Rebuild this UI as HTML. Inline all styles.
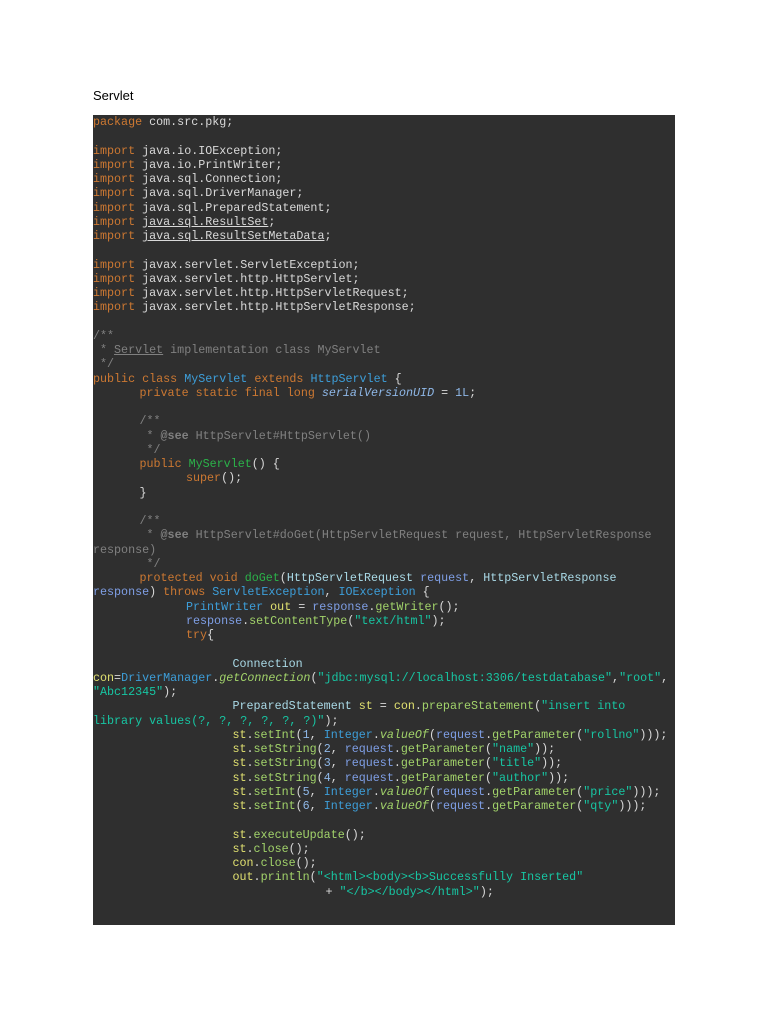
<!DOCTYPE html>
<html><head><meta charset="utf-8"><style>
body{margin:0;background:#fff;width:768px;height:1024px;position:relative;overflow:hidden}
.t{position:absolute;left:93px;top:88px;font:13px "Liberation Sans",sans-serif;color:#000}
pre{position:absolute;left:93px;top:115px;width:582px;height:810px;margin:0;background:#2f2f2f;color:#d9d9d9;font:11.7px/14.25px "Liberation Mono",monospace;white-space:pre;tab-size:46.5px;-moz-tab-size:46.5px;overflow:hidden}
.k{color:#cc7832}.c{color:#808080}.b{color:#3d9ed9}.y{color:#e0e070}.p{color:#7f9fe6}.s{color:#17c6a3}.m{color:#a2d36a}.g{color:#2bb34a}.n{color:#a9d9e6}.i{font-style:italic}.u{text-decoration:underline}.l{color:#8fb8e8}
</style></head><body>
<div class="t">Servlet</div>
<pre><span class="k">package</span> com.src.pkg;

<span class="k">import</span> java.io.IOException;
<span class="k">import</span> java.io.PrintWriter;
<span class="k">import</span> java.sql.Connection;
<span class="k">import</span> java.sql.DriverManager;
<span class="k">import</span> java.sql.PreparedStatement;
<span class="k">import</span> <span class="u">java.sql.ResultSet</span>;
<span class="k">import</span> <span class="u">java.sql.ResultSetMetaData</span>;

<span class="k">import</span> javax.servlet.ServletException;
<span class="k">import</span> javax.servlet.http.HttpServlet;
<span class="k">import</span> javax.servlet.http.HttpServletRequest;
<span class="k">import</span> javax.servlet.http.HttpServletResponse;

<span class="c">/**
 * <span class="u">Servlet</span> implementation class MyServlet
 */</span>
<span class="k">public class</span> <span class="b">MyServlet</span> <span class="k">extends</span> <span class="b">HttpServlet</span> {
	<span class="k">private static final long</span> <span class="l i">serialVersionUID</span> = <span class="l">1L</span>;

	<span class="c">/**
	 * <b>@see</b> HttpServlet#HttpServlet()
	 */</span>
	<span class="k">public</span> <span class="g">MyServlet</span>() {
		<span class="k">super</span>();
	}

	<span class="c">/**
	 * <b>@see</b> HttpServlet#doGet(HttpServletRequest request, HttpServletResponse
response)
	 */</span>
	<span class="k">protected void</span> <span class="g">doGet</span>(<span class="n">HttpServletRequest</span> <span class="p">request</span>, <span class="n">HttpServletResponse</span>
<span class="p">response</span>) <span class="k">throws</span> <span class="b">ServletException</span>, <span class="b">IOException</span> {
		<span class="b">PrintWriter</span> <span class="y">out</span> = <span class="p">response</span>.<span class="m">getWriter</span>();
		<span class="p">response</span>.<span class="m">setContentType</span>(<span class="s">"text/html"</span>);
		<span class="k">try</span>{

			<span class="n">Connection</span>
<span class="y">con</span>=<span class="b">DriverManager</span>.<span class="m i">getConnection</span>(<span class="s">"jdbc:mysql://localhost:3306/testdatabase"</span>,<span class="s">"root"</span>,
<span class="s">"Abc12345"</span>);
			<span class="n">PreparedStatement</span> <span class="y">st</span> = <span class="y">con</span>.<span class="m">prepareStatement</span>(<span class="s">"insert into
library values(?, ?, ?, ?, ?, ?)"</span>);
			<span class="y">st</span>.<span class="m">setInt</span>(<span class="l">1</span>, <span class="b">Integer</span>.<span class="m i">valueOf</span>(<span class="p">request</span>.<span class="m">getParameter</span>(<span class="s">"rollno"</span>)));
			<span class="y">st</span>.<span class="m">setString</span>(<span class="l">2</span>, <span class="p">request</span>.<span class="m">getParameter</span>(<span class="s">"name"</span>));
			<span class="y">st</span>.<span class="m">setString</span>(<span class="l">3</span>, <span class="p">request</span>.<span class="m">getParameter</span>(<span class="s">"title"</span>));
			<span class="y">st</span>.<span class="m">setString</span>(<span class="l">4</span>, <span class="p">request</span>.<span class="m">getParameter</span>(<span class="s">"author"</span>));
			<span class="y">st</span>.<span class="m">setInt</span>(<span class="l">5</span>, <span class="b">Integer</span>.<span class="m i">valueOf</span>(<span class="p">request</span>.<span class="m">getParameter</span>(<span class="s">"price"</span>)));
			<span class="y">st</span>.<span class="m">setInt</span>(<span class="l">6</span>, <span class="b">Integer</span>.<span class="m i">valueOf</span>(<span class="p">request</span>.<span class="m">getParameter</span>(<span class="s">"qty"</span>)));

			<span class="y">st</span>.<span class="m">executeUpdate</span>();
			<span class="y">st</span>.<span class="m">close</span>();
			<span class="y">con</span>.<span class="m">close</span>();
			<span class="y">out</span>.<span class="m">println</span>(<span class="s">"&lt;html&gt;&lt;body&gt;&lt;b&gt;Successfully Inserted"</span>
					+ <span class="s">"&lt;/b&gt;&lt;/body&gt;&lt;/html&gt;"</span>);
</pre>
</body></html>
